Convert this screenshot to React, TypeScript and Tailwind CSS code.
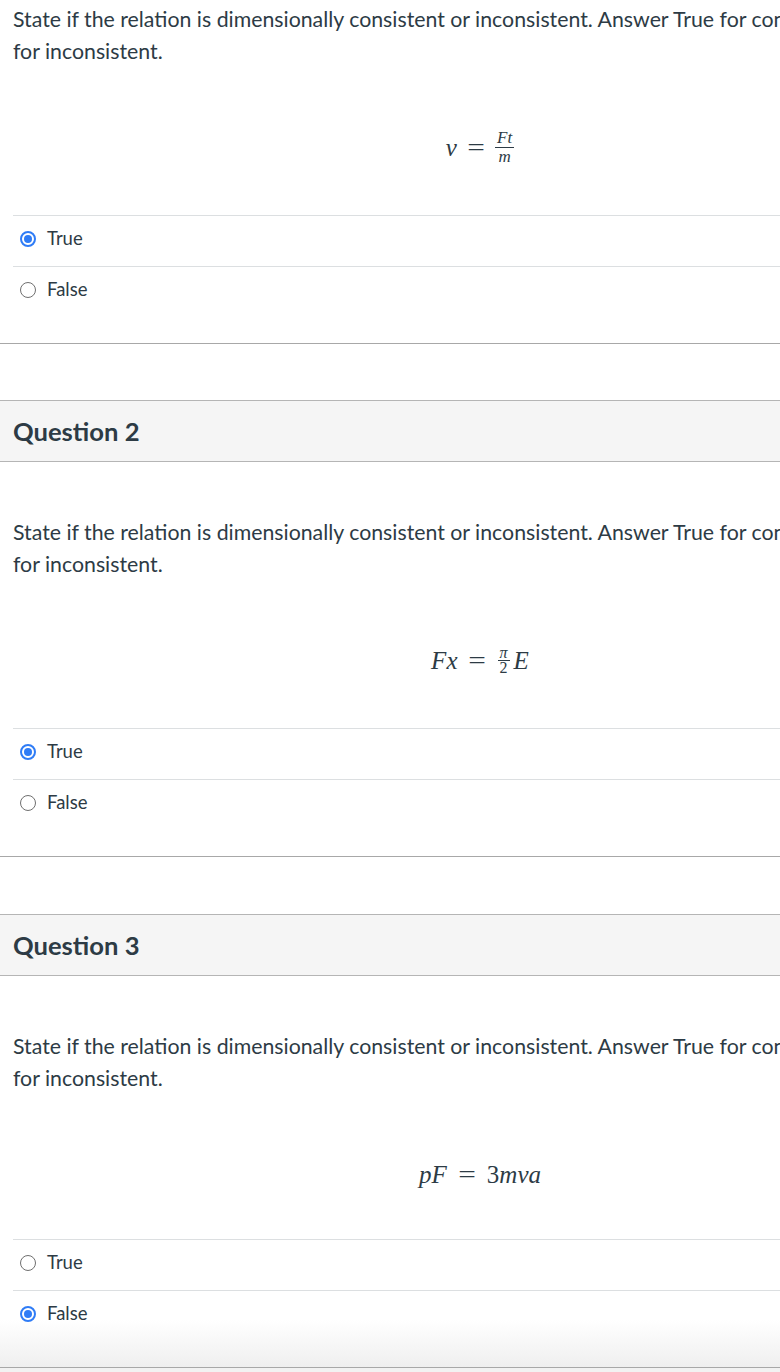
import React from "react";

const Radio = ({ checked }: { checked: boolean }) =>
  checked ? (
    <span className="flex h-[16px] w-[16px] shrink-0 items-center justify-center rounded-full border-2 border-[#2f7cf6] bg-white">
      <span className="h-[8px] w-[8px] rounded-full bg-[#2f7cf6]" />
    </span>
  ) : (
    <span className="h-[16px] w-[16px] shrink-0 rounded-full border border-[#6f6f6f] bg-white" />
  );

const Answer = ({ label, checked }: { label: string; checked: boolean }) => (
  <div className="flex h-[51px] items-center gap-[11px] border-t border-[#dcdfe1] pb-[4px] pl-[7px] text-[18.5px]">
    <Radio checked={checked} />
    <span>{label}</span>
  </div>
);

const mathCls = "font-['Liberation_Serif','DejaVu_Serif',serif] italic text-[25px] leading-none";

const Eq1 = () => (
  <span className={`${mathCls} inline-flex items-center gap-[12px]`}>
    <span>v</span>
    <span className="not-italic scale-x-125">=</span>
    <span className="inline-flex flex-col items-center text-[17px] leading-[17px]">
      <span className="border-b border-[#2d3b45] px-[2px] pb-[1px]">Ft</span>
      <span>m</span>
    </span>
  </span>
);

const Eq2 = () => (
  <span className={`${mathCls} inline-flex items-center gap-[13px]`}>
    <span>Fx</span>
    <span className="not-italic scale-x-125">=</span>
    <span className="inline-flex items-center gap-[4px]">
      <span className="inline-flex flex-col items-center text-[16px] leading-[14px]">
        <span className="border-b border-[#2d3b45] px-[2px]">π</span>
        <span className="not-italic">2</span>
      </span>
      <span>E</span>
    </span>
  </span>
);

const Eq3 = () => (
  <span className={`${mathCls} inline-flex items-center gap-[13px]`}>
    <span>pF</span>
    <span className="not-italic scale-x-125">=</span>
    <span>
      <span className="not-italic">3</span>mva
    </span>
  </span>
);

const QuestionText = () => (
  <div className="whitespace-nowrap text-[21.3px] leading-[32px]">
    <div>State if the relation is dimensionally consistent or inconsistent. Answer True for consistent and False</div>
    <div>for inconsistent.</div>
  </div>
);

const Header = ({ n }: { n: number }) => (
  <div className="flex h-[62px] items-center border-y border-[#b5b5b5] bg-[#f5f5f5] px-[13px] text-[25.6px] font-bold">
    Question {n}
  </div>
);

export default function App() {
  return (
    <div className="h-[1372px] w-[780px] overflow-hidden bg-[#f2f2f2] font-['Lato','Noto_Sans',sans-serif] text-[#2d3b45]">
      <div className="w-[960px] bg-white">
        {/* Question 1 */}
        <div className="border-b border-[#a8a8a8] px-[13px] pt-[3px]">
          <QuestionText />
          <div className="flex h-[148px] justify-center pt-[60px]">
            <div className="flex h-[40px] items-center">
              <Eq1 />
            </div>
          </div>
          <Answer label="True" checked />
          <Answer label="False" checked={false} />
          <div className="h-[26px]" />
        </div>

        <div className="h-[56px]" />

        {/* Question 2 */}
        <Header n={2} />
        <div className="border-b border-[#a8a8a8] px-[13px] pt-[54px]">
          <QuestionText />
          <div className="flex h-[148px] justify-center pt-[60px]">
            <div className="flex h-[40px] items-center">
              <Eq2 />
            </div>
          </div>
          <Answer label="True" checked />
          <Answer label="False" checked={false} />
          <div className="h-[26px]" />
        </div>

        <div className="h-[57px]" />

        {/* Question 3 */}
        <Header n={3} />
        <div className="border-b border-[#a8a8a8] bg-linear-to-b from-white from-[88%] to-[#efefef] px-[13px] pt-[54px]">
          <QuestionText />
          <div className="flex h-[145px] justify-center pt-[60px]">
            <div className="flex h-[40px] items-center">
              <Eq3 />
            </div>
          </div>
          <Answer label="True" checked={false} />
          <Answer label="False" checked />
          <div className="h-[26px]" />
        </div>
      </div>
    </div>
  );
}
